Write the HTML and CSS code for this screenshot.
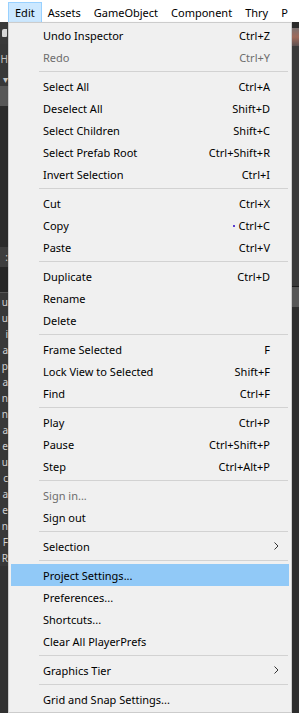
FILE: index.html
```html
<!DOCTYPE html>
<html lang="en">
<head>
<meta charset="UTF-8">
<meta name="viewport" content="width=device-width, initial-scale=1.0">
<title>Edit menu</title>
<link rel="stylesheet" href="styles.css">
</head>
<body>
    <header class="menubar">
        <span class="mb-item active">Edit</span>
        <span class="mb-item">Assets</span>
        <span class="mb-item">GameObject</span>
        <span class="mb-item">Component</span>
        <span class="mb-item">Thry</span>
        <span class="mb-item">P</span>
    </header>
    <div class="stage">
        <!-- editor peeking out on the left -->
        <aside class="editor-left">
            <div class="blk tools"><span class="hand"></span></div>
            <div class="blk tools-h"><span class="line">H</span></div>
            <div class="blk tools-arrow"><span class="line">▾</span></div>
            <div class="blk band"></div>
            <div class="blk scene"></div>
            <div class="blk search"><span class="line">:</span></div>
            <div class="blk gap"></div>
            <div class="blk list">
                <span class="line">u</span>
                <span class="line">u</span>
                <span class="line">i</span>
                <span class="line">a</span>
                <span class="line">p</span>
                <span class="line">a</span>
                <span class="line">n</span>
                <span class="line">n</span>
                <span class="line">a</span>
                <span class="line">e</span>
                <span class="line">u</span>
                <span class="line">c</span>
                <span class="line">a</span>
                <span class="line">e</span>
                <span class="line">n</span>
                <span class="line">F</span>
                <span class="line">R</span>
            </div>
            <div class="blk rest"></div>
        </aside>

        <ul class="menu">
            <li class="item"><span>Undo Inspector</span><span class="key">Ctrl+Z</span></li>
            <li class="item disabled"><span>Redo</span><span class="key">Ctrl+Y</span></li>
            <li class="sep"></li>
            <li class="item"><span>Select All</span><span class="key">Ctrl+A</span></li>
            <li class="item"><span>Deselect All</span><span class="key">Shift+D</span></li>
            <li class="item"><span>Select Children</span><span class="key">Shift+C</span></li>
            <li class="item"><span>Select Prefab Root</span><span class="key">Ctrl+Shift+R</span></li>
            <li class="item"><span>Invert Selection</span><span class="key">Ctrl+I</span></li>
            <li class="sep"></li>
            <li class="item"><span>Cut</span><span class="key">Ctrl+X</span></li>
            <li class="item"><span>Copy</span><span class="key"><i class="dot"></i>Ctrl+C</span></li>
            <li class="item"><span>Paste</span><span class="key">Ctrl+V</span></li>
            <li class="sep"></li>
            <li class="item"><span>Duplicate</span><span class="key">Ctrl+D</span></li>
            <li class="item"><span>Rename</span></li>
            <li class="item"><span>Delete</span></li>
            <li class="sep"></li>
            <li class="item"><span>Frame Selected</span><span class="key">F</span></li>
            <li class="item"><span>Lock View to Selected</span><span class="key">Shift+F</span></li>
            <li class="item"><span>Find</span><span class="key">Ctrl+F</span></li>
            <li class="sep"></li>
            <li class="item"><span>Play</span><span class="key">Ctrl+P</span></li>
            <li class="item"><span>Pause</span><span class="key">Ctrl+Shift+P</span></li>
            <li class="item"><span>Step</span><span class="key">Ctrl+Alt+P</span></li>
            <li class="sep"></li>
            <li class="item disabled"><span>Sign in...</span></li>
            <li class="item"><span>Sign out</span></li>
            <li class="sep"></li>
            <li class="item sub"><span>Selection</span>
                <svg class="chev" width="5" height="8" viewBox="0 0 5 8"><polyline points="0.5,0.5 4,4 0.5,7.5" fill="none" stroke="#333" stroke-width="1"/></svg>
            </li>
            <li class="sep"></li>
            <li class="item hover"><span>Project Settings...</span></li>
            <li class="item"><span>Preferences...</span></li>
            <li class="item"><span>Shortcuts...</span></li>
            <li class="item"><span>Clear All PlayerPrefs</span></li>
            <li class="sep"></li>
            <li class="item sub"><span>Graphics Tier</span>
                <svg class="chev" width="5" height="8" viewBox="0 0 5 8"><polyline points="0.5,0.5 4,4 0.5,7.5" fill="none" stroke="#333" stroke-width="1"/></svg>
            </li>
            <li class="sep"></li>
            <li class="item"><span>Grid and Snap Settings...</span></li>
        </ul>

        <!-- editor peeking out on the right -->
        <aside class="editor-right">
            <div class="blk r-top"></div>
            <div class="blk r-icon"></div>
            <div class="blk r-dark"></div>
            <div class="blk r-band"></div>
            <div class="blk r-rest"></div>
        </aside>
    </div>
</body>
</html>
```

FILE: styles.css
```css
body, html {
    margin: 0;
    padding: 0;
    width: 299px;
    height: 713px;
    overflow: hidden;
    background-color: #333;
}
body {
    font-family: 'Noto Sans', 'Open Sans', Arial, sans-serif;
    font-size: 11px;
    color: #000;
}
.menubar {
    display: flex;
    height: 22px;
    padding-left: 8px;
    background: #fff;
    white-space: nowrap;
    overflow: hidden;
}
.mb-item {
    display: flex;
    align-items: center;
    height: 19px;
    margin-top: 2px;
    padding: 0 6px 0 5px;
    border: 1px solid transparent;
    border-bottom: none;
}
.mb-item.active {
    padding: 0 6px;
    background: #cce8ff;
    border-color: #99d1ff;
}
.stage {
    display: flex;
    height: 691px;
}

/* editor strips */
.editor-left {
    width: 8px;
    display: flex;
    flex-direction: column;
    overflow: hidden;
    font-size: 10px;
    color: #c4c4c4;
}
.editor-right {
    width: 7px;
    display: flex;
    flex-direction: column;
    overflow: hidden;
}
.blk {
    display: flex;
    flex-direction: column;
    flex-shrink: 0;
}
.line {
    display: flex;
    justify-content: flex-end;
    height: 16px;
    line-height: 16px;
    white-space: nowrap;
}
.tools {
    height: 22px;
    background: #3a3a3a;
    justify-content: center;
    align-items: flex-end;
}
.hand {
    width: 5px;
    height: 8px;
    margin-right: 1px;
    background: #d8d8d8;
    border-radius: 2px 0 1px 1px;
}
.tools-h {
    height: 30px;
    background: #383838;
    justify-content: center;
}
.tools-arrow {
    height: 12px;
    background: #383838;
}
.tools-arrow .line {
    height: 12px;
    line-height: 10px;
}
.band {
    height: 20px;
    background: #575757;
}
.scene {
    height: 141px;
    background: #2b2b2b;
}
.search {
    height: 20px;
    background: #3e3e3e;
    justify-content: center;
    color: #d0d0d0;
}
.gap {
    height: 25px;
    background: #262626;
    border-bottom: 1px solid #555;
}
.list {
    height: 272px;
    padding-top: 1px;
    background: #383838;
    color: #d2d2d2;
}
.rest {
    flex: 1;
    background: #323232;
}
.r-top {
    height: 6px;
    background: #2a2a2a;
}
.r-icon {
    height: 18px;
    background: linear-gradient(#7a7070, #a06a5a 50%, #5c5050);
}
.r-dark {
    height: 240px;
    background: #3a3a3a;
    border-bottom: 1px solid #1a1a1a;
}
.r-band {
    height: 20px;
    background: #575757;
}
.r-rest {
    flex: 1;
    background: #2e2e2e;
}

/* popup menu */
.menu {
    list-style-type: none;
    width: 278px;
    margin: 0;
    padding: 1px 2px 2px 2px;
    background: #f0f0f0;
    border: 1px solid #cccccc;
    box-shadow: 2px 2px 3px rgba(0, 0, 0, 0.35);
}
.item {
    display: flex;
    justify-content: space-between;
    align-items: center;
    height: 22px;
    padding: 0 19px 0 32px;
    white-space: nowrap;
}
.item.disabled {
    color: #6d6d6d;
}
.item.hover {
    background: #91c9f7;
}
.item.sub {
    padding-right: 10px;
}
.key {
    display: flex;
    align-items: center;
}
.dot {
    width: 2px;
    height: 2px;
    margin: 2px 3px 0 0;
    background: #5a3fd0;
}
.sep {
    height: 1px;
    margin: 3px 1px 3px 28px;
    background: #d2d2d2;
}
```
